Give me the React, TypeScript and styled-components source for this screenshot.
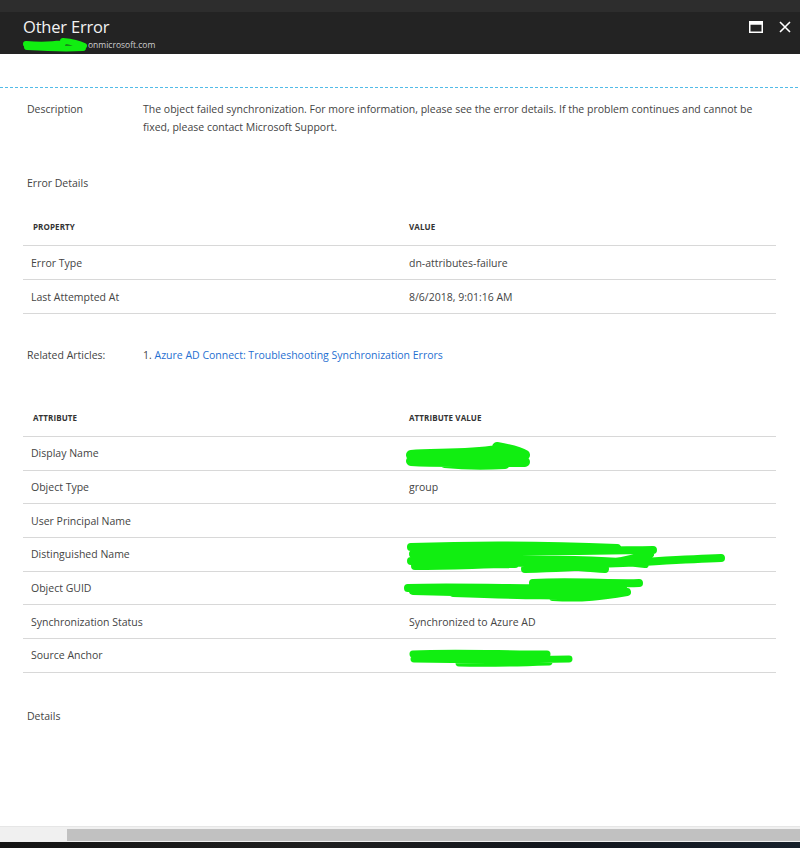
import React from "react"
import styled, { createGlobalStyle } from "styled-components"

const GlobalStyle = createGlobalStyle`
  html, body {
    margin: 0;
    padding: 0;
    background: #fff;
  }
  body {
    font-family: "Open Sans", "Noto Sans", "Liberation Sans", sans-serif;
  }
`

const Page = styled.div`
  width: 800px;
  height: 848px;
  display: flex;
  flex-direction: column;
  overflow: hidden;
  background: #fff;
`

const TopStrip = styled.div`
  height: 12px;
  background: #2d2d2d;
`

const Header = styled.div`
  height: 42px;
  background: #232323;
  display: flex;
  justify-content: space-between;
  padding: 0 9px 0 23px;
`

const TitleBlock = styled.div`
  display: flex;
  flex-direction: column;
  padding-top: 4px;
`

const Title = styled.div`
  font-size: 16.5px;
  line-height: 22px;
  color: #f2f2f2;
  letter-spacing: -0.2px;
`

const Subtitle = styled.div`
  display: flex;
  align-items: center;
  font-size: 8.5px;
  line-height: 12px;
  color: #cfcfcf;
  margin-top: 1px;
`

const HeaderIcons = styled.div`
  display: flex;
  align-items: flex-start;
  gap: 16px;
  padding-top: 9px;
`

const Body = styled.div`
  flex: 1;
  display: flex;
  flex-direction: column;
`

const DashedRule = styled.div`
  margin-top: 33px;
  height: 1px;
  background-image: repeating-linear-gradient(90deg, #52bbe8 0 3px, transparent 3px 5px);
`

const Content = styled.div`
  padding: 12px 24px 0 23px;
  display: flex;
  flex-direction: column;
`

const InfoRow = styled.div<{ $mt?: number }>`
  display: grid;
  grid-template-columns: 116px 1fr;
  padding-left: 4px;
  margin-top: ${p => p.$mt ?? 0}px;
  font-size: 10.5px;
  line-height: 18px;
  color: #444;
`

const SectionLabel = styled.div<{ $mt?: number }>`
  padding-left: 4px;
  margin-top: ${p => p.$mt ?? 0}px;
  font-size: 10.5px;
  line-height: 18px;
  color: #444;
`

const Link = styled.a`
  color: #1f6fd1;
  text-decoration: none;
`

const Table = styled.div<{ $mt?: number }>`
  margin-top: ${p => p.$mt ?? 0}px;
  display: flex;
  flex-direction: column;
`

const HeadRow = styled.div`
  display: grid;
  grid-template-columns: 378px 1fr;
  height: 38px;
  align-items: center;
  border-bottom: 1px solid #d8d8d8;
  font-size: 8px;
  font-weight: 700;
  color: #333;
  text-transform: uppercase;
  letter-spacing: 0.1px;
`

const HeadCell = styled.div`
  padding-left: 10px;
  &:nth-child(2) {
    padding-left: 8px;
  }
`

const Row = styled.div<{ $h?: number }>`
  display: grid;
  grid-template-columns: 378px 1fr;
  height: ${p => p.$h ?? 33}px;
  align-items: center;
  border-bottom: 1px solid #d8d8d8;
  font-size: 10.5px;
  color: #444;
`

const Cell = styled.div`
  position: relative;
  padding-left: 8px;
  height: 100%;
  display: flex;
  align-items: center;
`

const Scribble = styled.svg<{ $x: number; $y: number }>`
  position: absolute;
  left: ${p => p.$x}px;
  top: ${p => p.$y}px;
  overflow: visible;
  pointer-events: none;
`

const ScrollTrack = styled.div`
  height: 15px;
  background: #f0f0f0;
  border-top: 1px solid #e6e6e6;
  display: flex;
  align-items: center;
  padding-left: 67px;
`

const ScrollThumb = styled.div`
  flex: 1;
  height: 12px;
  background: #c1c1c1;
`

const Taskbar = styled.div`
  height: 6px;
  background: linear-gradient(90deg, #141414 0%, #1f1f1f 40%, #12161d 70%, #17202b 100%);
`

const green = "#11ee11"

const MaximizeIcon = () => (
  <svg width="14" height="12" viewBox="0 0 14 12">
    <rect x="0.75" y="0.75" width="12.5" height="10.5" fill="none" stroke="#fff" strokeWidth="1.5" />
    <rect x="0.75" y="0.75" width="12.5" height="3" fill="#fff" />
  </svg>
)

const CloseIcon = () => (
  <svg width="12" height="12" viewBox="0 0 12 12">
    <path d="M1 1 L11 11 M11 1 L1 11" stroke="#fff" strokeWidth="1.6" />
  </svg>
)

const HeaderScribble = () => (
  <svg width="65" height="10" viewBox="0 0 65 10" style={{ overflow: "visible" }}>
    <path d="M3 4 C15 5 28 5 40 3 M40 1 C50 2 57 4 61 6 M4 7 C20 8 40 9 60 8" stroke={green} strokeWidth="6" strokeLinecap="round" fill="none" />
  </svg>
)

const attributes: { name: string; value?: string; scribble?: React.ReactNode }[] = [
  {
    name: "Display Name",
    scribble: (
      <Scribble $x={4} $y={4} width="126" height="28" viewBox="0 0 126 28">
        <path
          d="M6 14 C30 12 60 14 92 9 M92 6 C104 8 114 10 120 14 M6 20 C40 22 80 20 120 21 M10 17 C50 18 90 16 118 17 M40 22 C60 24 80 24 100 23"
          stroke={green}
          strokeWidth="10"
          strokeLinecap="round"
          fill="none"
        />
      </Scribble>
    ),
  },
  { name: "Object Type", value: "group" },
  { name: "User Principal Name", value: "" },
  {
    name: "Distinguished Name",
    scribble: (
      <Scribble $x={4} $y={2} width="320" height="34" viewBox="0 0 320 34">
        <path
          d="M6 7 C60 5 140 5 212 8 M8 14 C80 12 170 11 248 10 M6 21 C90 19 180 18 240 24 M150 25 C200 25 260 20 316 18 M120 29 C180 28 210 24 245 14 M60 20 C120 22 160 26 200 29 M10 26 C50 26 80 24 110 24"
          stroke={green}
          strokeWidth="8"
          strokeLinecap="round"
          fill="none"
        />
      </Scribble>
    ),
  },
  {
    name: "Object GUID",
    scribble: (
      <Scribble $x={2} $y={6} width="242" height="24" viewBox="0 0 242 24">
        <path
          d="M5 10 C60 8 140 12 220 10 M130 5 C170 3 210 6 236 5 M50 15 C110 17 170 19 205 16 M150 19 C180 21 200 18 224 14 M10 13 C40 14 80 15 120 14"
          stroke={green}
          strokeWidth="8"
          strokeLinecap="round"
          fill="none"
        />
      </Scribble>
    ),
  },
  { name: "Synchronization Status", value: "Synchronized to Azure AD" },
  {
    name: "Source Anchor",
    scribble: (
      <Scribble $x={8} $y={9} width="164" height="18" viewBox="0 0 164 18">
        <path
          d="M4 6 C40 4 90 6 138 6 M5 11 C50 12 110 12 160 11 M50 15 C80 16 110 15 140 14"
          stroke={green}
          strokeWidth="7"
          strokeLinecap="round"
          fill="none"
        />
      </Scribble>
    ),
  },
]

export default function App() {
  return (
    <Page>
      <GlobalStyle />
      <TopStrip />
      <Header>
        <TitleBlock>
          <Title>Other Error</Title>
          <Subtitle>
            <HeaderScribble />
            onmicrosoft.com
          </Subtitle>
        </TitleBlock>
        <HeaderIcons>
          <MaximizeIcon />
          <CloseIcon />
        </HeaderIcons>
      </Header>
      <Body>
        <DashedRule />
        <Content>
          <InfoRow>
            <div>Description</div>
            <div>
              The object failed synchronization. For more information, please see the error details. If the problem
              continues and cannot be fixed, please contact Microsoft Support.
            </div>
          </InfoRow>

          <SectionLabel $mt={38}>Error Details</SectionLabel>

          <Table $mt={15}>
            <HeadRow>
              <HeadCell>Property</HeadCell>
              <HeadCell>Value</HeadCell>
            </HeadRow>
            <Row>
              <Cell>Error Type</Cell>
              <Cell>dn-attributes-failure</Cell>
            </Row>
            <Row>
              <Cell>Last Attempted At</Cell>
              <Cell>8/6/2018, 9:01:16 AM</Cell>
            </Row>
          </Table>

          <InfoRow $mt={32}>
            <div>Related Articles:</div>
            <div>
              1. <Link href="#">Azure AD Connect: Troubleshooting Synchronization Errors</Link>
            </div>
          </InfoRow>

          <Table $mt={34}>
            <HeadRow>
              <HeadCell>Attribute</HeadCell>
              <HeadCell>Attribute Value</HeadCell>
            </HeadRow>
            {attributes.map(a => (
              <Row key={a.name} $h={32.7}>
                <Cell>{a.name}</Cell>
                <Cell>
                  {a.value}
                  {a.scribble}
                </Cell>
              </Row>
            ))}
          </Table>

          <SectionLabel $mt={34}>Details</SectionLabel>
        </Content>
      </Body>
      <ScrollTrack>
        <ScrollThumb />
      </ScrollTrack>
      <Taskbar />
    </Page>
  )
}
